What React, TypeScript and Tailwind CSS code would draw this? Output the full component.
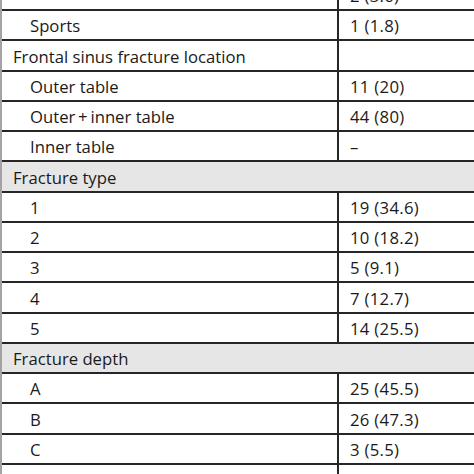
import React from "react";

type Row =
  | { kind: "data"; label: string; value: string; indent?: boolean }
  | { kind: "section"; label: string };

const rows: Row[] = [
  { kind: "data", label: "", value: "2 (3.6)", indent: true },
  { kind: "data", label: "Sports", value: "1 (1.8)", indent: true },
  { kind: "data", label: "Frontal sinus fracture location", value: "" },
  { kind: "data", label: "Outer table", value: "11 (20)", indent: true },
  { kind: "data", label: "Outer\u2009+\u2009inner table", value: "44 (80)", indent: true },
  { kind: "data", label: "Inner table", value: "\u2013", indent: true },
  { kind: "section", label: "Fracture type" },
  { kind: "data", label: "1", value: "19 (34.6)", indent: true },
  { kind: "data", label: "2", value: "10 (18.2)", indent: true },
  { kind: "data", label: "3", value: "5 (9.1)", indent: true },
  { kind: "data", label: "4", value: "7 (12.7)", indent: true },
  { kind: "data", label: "5", value: "14 (25.5)", indent: true },
  { kind: "section", label: "Fracture depth" },
  { kind: "data", label: "A", value: "25 (45.5)", indent: true },
  { kind: "data", label: "B", value: "26 (47.3)", indent: true },
  { kind: "data", label: "C", value: "3 (5.5)", indent: true },
  { kind: "data", label: "E", value: "1 (1.8)", indent: true },
];

export default function App() {
  return (
    <div className="w-[474px] h-[474px] overflow-hidden bg-white">
      <div
        className="relative -mt-[21.27px] text-[16.7px] text-[#1a1a1a] leading-none"
        style={{ fontFamily: '"Open Sans", "Noto Sans", sans-serif' }}
      >
        <div className="absolute left-0 top-0 bottom-0 w-[2px] bg-[#a3a3a3] z-0" />
        {rows.map((r, i) =>
          r.kind === "section" ? (
            <div
              key={i}
              className="h-[30.27px] border-t-2 border-[#262626] bg-[#e6e6e6] flex items-center pl-[13px] pt-[3px]"
            >
              {r.label}
            </div>
          ) : (
            <div key={i} className="h-[30.27px] border-t-2 border-[#262626] flex">
              <div
                className={`w-[339px] border-r-2 border-[#262626] flex items-center pt-[3px] ${
                  r.indent ? "pl-[30px]" : "pl-[13px]"
                }`}
              >
                {r.label}
              </div>
              <div className="flex-1 flex items-center pl-[11px] pt-[3px] tracking-[0.3px]">{r.value}</div>
            </div>
          )
        )}
      </div>
    </div>
  );
}
